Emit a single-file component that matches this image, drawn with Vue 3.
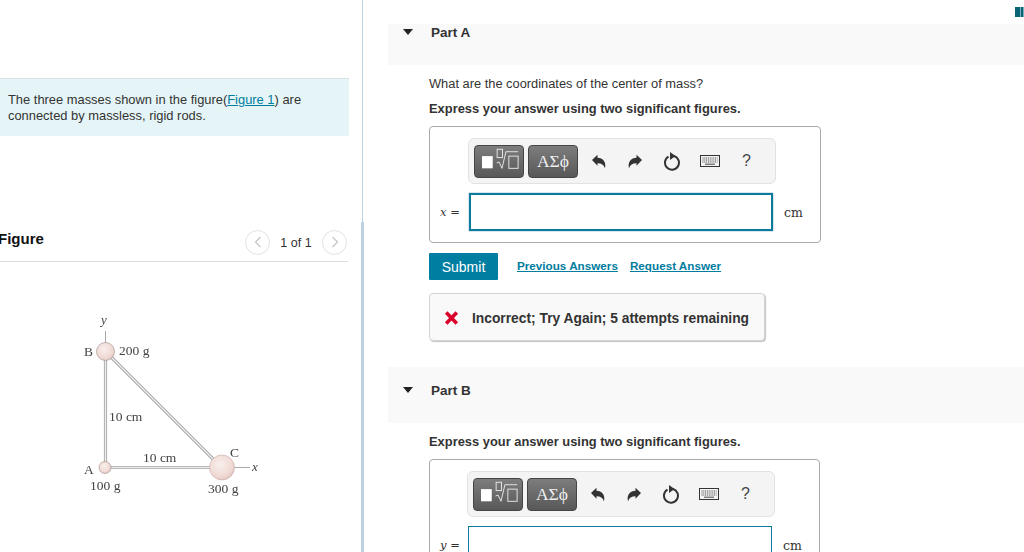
<script setup>
const parts = [
  { id: 'A', cls: 'part-a', question: 'What are the coordinates of the center of mass?', variable: 'x', feedback: true },
  { id: 'B', cls: 'part-b', question: '', variable: 'y', feedback: false }
]
</script>

<template>
  <div class="page">
    <aside class="left">
      <span class="thumb"></span>
      <div class="intro">
        The three masses shown in the figure(<a class="link">Figure 1</a>) are connected by massless, rigid rods.
      </div>
      <div class="fig-head">
        <h2>Figure</h2>
        <div class="pager">
          <span class="circle"><svg width="8" height="12" viewBox="0 0 8 12"><path d="M6.5 1 L1.5 6 L6.5 11" fill="none" stroke="#c4c4c4" stroke-width="1.2"/></svg></span>
          <span class="count">1 of 1</span>
          <span class="circle"><svg width="8" height="12" viewBox="0 0 8 12"><path d="M1.5 1 L6.5 6 L1.5 11" fill="none" stroke="#c4c4c4" stroke-width="1.2"/></svg></span>
        </div>
      </div>
      <svg class="diagram" width="220" height="210" viewBox="60 300 220 210">
        <defs>
          <radialGradient id="ball" cx="0.42" cy="0.38" r="0.7">
            <stop offset="0" stop-color="#f8efec"/>
            <stop offset="0.7" stop-color="#f0d9d4"/>
            <stop offset="1" stop-color="#d9bcb6"/>
          </radialGradient>
        </defs>
        <path d="M105.5 331 V343 M234 467.5 H250" stroke="#aaa" stroke-width="1" fill="none"/>
        <path d="M105.5 352 V467 M106 352 L221 467 M105 467.5 H221" stroke="#a9a9a9" stroke-width="3.2" fill="none"/>
        <path d="M105.5 352 V467 M106 352 L221 467 M105 467.5 H221" stroke="#ececec" stroke-width="1.4" fill="none"/>
        <circle cx="105.5" cy="351.5" r="9" fill="url(#ball)" stroke="#a99a96" stroke-width=".7"/>
        <circle cx="105" cy="467.5" r="6" fill="url(#ball)" stroke="#a99a96" stroke-width=".7"/>
        <circle cx="222" cy="467.5" r="12.5" fill="url(#ball)" stroke="#c9aaa5" stroke-width=".6"/>
        <text class="fig-i" x="101" y="324">y</text>
        <text class="fig-t" x="84" y="356">B</text>
        <text class="fig-t" x="119" y="355">200 g</text>
        <text class="fig-t" x="109" y="421">10 cm</text>
        <text class="fig-t" x="143" y="462">10 cm</text>
        <text class="fig-t" x="230" y="457">C</text>
        <text class="fig-i" x="252" y="471">x</text>
        <text class="fig-t" x="84" y="474">A</text>
        <text class="fig-t" x="90" y="490">100 g</text>
        <text class="fig-t" x="208" y="493">300 g</text>
      </svg>
    </aside>

    <main class="right">
      <span class="corner"></span>
      <section v-for="p in parts" :key="p.id" :class="['part', p.cls]">
        <header class="part-head">
          <span class="tri"></span>
          <span class="part-title">Part {{ p.id }}</span>
        </header>
        <div class="part-body">
          <p v-if="p.question" class="question">{{ p.question }}</p>
          <p class="express">Express your answer using two significant figures.</p>
          <div class="answer">
            <div class="toolbar">
              <button class="tool-btn templ">
                <svg width="42" height="26" viewBox="0 0 42 26">
                  <rect x="0" y="8" width="11" height="12.5" fill="#fff"/>
                  <rect x="15.5" y="1" width="5.5" height="8.5" fill="none" stroke="#e4e4e4" stroke-width="1"/>
                  <path d="M15 15 L17.5 14 L20.5 20.5 L24.5 3.5 H37" fill="none" stroke="#e4e4e4" stroke-width="1"/>
                  <rect x="27.5" y="8" width="9.5" height="12.5" fill="none" stroke="#e4e4e4" stroke-width="1"/>
                </svg>
              </button>
              <button class="tool-btn greek">ΑΣϕ</button>
              <span class="tool t-undo">
                <svg width="16" height="15" viewBox="0 0 16 15"><path d="M1 6 L6.5 .8 V3.8 C12 3.8 15.5 8 14 14.2 C12.8 10.8 10.5 9.2 6.5 9.2 V11.8 Z" fill="#333"/></svg>
              </span>
              <span class="tool t-redo">
                <svg width="16" height="15" viewBox="0 0 16 15"><path d="M15 6 L9.5 .8 V3.8 C4 3.8 .5 8 2 14.2 C3.2 10.8 5.5 9.2 9.5 9.2 V11.8 Z" fill="#333"/></svg>
              </span>
              <span class="tool t-reset">
                <svg width="18" height="20" viewBox="0 0 18 20"><path d="M5.5 5.6 A7 7 0 1 0 11 5" fill="none" stroke="#333" stroke-width="2"/><path d="M7 1 L12.5 5 L7 9 Z" fill="#333"/></svg>
              </span>
              <span class="tool t-keys">
                <svg width="20" height="12" viewBox="0 0 20 12">
                  <rect x=".5" y=".5" width="19" height="11" fill="#f4f4f4" stroke="#333"/>
                  <path d="M2.5 3 H17.5 M2.5 5 H17.5 M2.5 7 H17.5" stroke="#444" stroke-width="1" stroke-dasharray="1 .8"/>
                  <path d="M5 9.2 H15" stroke="#444" stroke-width="1"/>
                </svg>
              </span>
              <span class="tool t-help">?</span>
            </div>
            <div class="entry">
              <span class="var"><i>{{ p.variable }}</i> =</span>
              <div class="field"></div>
              <span class="unit">cm</span>
            </div>
          </div>
          <template v-if="p.feedback">
            <div class="actions">
              <button class="submit">Submit</button>
              <a class="action-link">Previous Answers</a>
              <a class="action-link">Request Answer</a>
            </div>
            <div class="feedback">
              <svg width="15" height="14" viewBox="0 0 15 14"><path d="M2.2 1.5 L12.8 12.5 M12.8 1.5 L2.2 12.5" stroke="#d9032c" stroke-width="3.6" fill="none"/></svg>
              <span>Incorrect; Try Again; 5 attempts remaining</span>
            </div>
          </template>
        </div>
      </section>
    </main>
  </div>
</template>

<style>
html, body { margin: 0; height: 552px; overflow: hidden; background: #fff; }
</style>

<style scoped>
.page {
  display: flex;
  height: 552px;
  overflow: hidden;
  font-family: "Liberation Sans", Arial, sans-serif;
  color: #333;
}
.left {
  position: relative;
  box-sizing: border-box;
  width: 363px;
  flex: none;
  padding: 78px 13px 0 0;
  border-right: 1.5px solid #bcd2e2;
}
.thumb {
  position: absolute;
  top: 222px;
  bottom: 0;
  right: -1.5px;
  width: 2.5px;
  background: #bcd2e2;
}
.intro {
  box-sizing: border-box;
  width: 349px;
  height: 58px;
  padding: 13px 8px 0;
  background: #e5f5f7;
  border-top: 1px solid #d9dfe0;
  font-size: 12.9px;
  line-height: 16px;
}
.link { color: #007c9e; text-decoration: underline; }
.fig-head {
  display: flex;
  align-items: center;
  justify-content: space-between;
  box-sizing: border-box;
  height: 36px;
  margin-top: 90px;
  padding-right: 1px;
  border-bottom: 1px solid #dcdcdc;
  width: 348px;
}
.fig-head h2 {
  margin: -9px 0 0 -2px;
  font-size: 15px;
  line-height: 20px;
  color: #111;
}
.pager { display: flex; align-items: center; margin-top: -3px; }
.circle {
  box-sizing: border-box;
  width: 25px;
  height: 25px;
  display: flex;
  align-items: center;
  justify-content: center;
  border: 1px solid #e2e2e2;
  border-radius: 50%;
}
.count { width: 52px; padding-top: 2px; text-align: center; font-size: 12.5px; color: #333; }
.diagram { display: block; margin: 38px 0 0 60px; filter: blur(.25px); }
.fig-t { font: 13.5px "Liberation Serif", serif; fill: #444; }
.fig-i { font: italic 13px "Liberation Serif", serif; fill: #444; }

.right { position: relative; flex: 1; min-width: 0; padding: 24px 0 0 25px; }
.corner {
  position: absolute;
  top: 7px;
  right: 0;
  width: 9px;
  height: 10px;
  background: linear-gradient(90deg, #0a6478 0 5px, #7fb0bc 5px 6px, #0a6478 6px 8px, #7fb0bc 8px);
}
.part-head {
  display: flex;
  background: #f9f9f9;
  box-sizing: border-box;
  padding-top: 1px;
  height: 41px;
  line-height: 15px;
}
.part-b .part-head { height: 56px; padding-top: 16px; }
.part-b { margin-top: 26px; }
.tri {
  width: 0;
  height: 0;
  margin: 4px 0 0 15px;
  border-left: 5.5px solid transparent;
  border-right: 5.5px solid transparent;
  border-top: 6px solid #222;
}
.part-title { margin-left: 18px; font-size: 13.5px; font-weight: bold; color: #333; }
.part-body { padding-left: 41px; }
.question { margin: 11px 0 0; font-size: 12.85px; line-height: 15px; }
.express { margin: 10px 0 0; font-size: 12.9px; font-weight: bold; line-height: 15px; }
.part-b .express { margin-top: 11px; }
.answer {
  box-sizing: border-box;
  width: 392px;
  height: 117px;
  margin-top: 10px;
  padding: 11px 0 0 43px;
  border: 1px solid #aaa;
  border-radius: 4px;
}
.part-b .answer { width: 391px; }
.toolbar {
  box-sizing: border-box;
  display: flex;
  align-items: center;
  width: 308px;
  height: 46px;
  margin-left: -5px;
  padding-left: 5px;
  background: #f4f4f4;
  border: 1px solid #e2e2e2;
  border-radius: 6px;
}
.tool-btn {
  box-sizing: border-box;
  height: 33px;
  width: 50px;
  padding: 0;
  display: flex;
  align-items: center;
  justify-content: center;
  background: linear-gradient(#7d7d7d, #585858);
  border: 1px solid #454545;
  border-radius: 4px;
}
.templ svg { margin-left: 7px; }
.greek {
  margin-left: 4px;
  color: #eee;
  font: 17.5px "Liberation Serif", serif;
}
.tool { display: flex; justify-content: center; align-items: center; }
.t-undo { margin-left: 13px; }
.t-redo { margin-left: 20px; }
.t-reset { margin-left: 20px; }
.t-keys { margin-left: 19px; }
.t-help { margin-left: 22px; font-size: 16px; color: #444; }
.entry { display: flex; align-items: center; margin: 9px 0 0 -33px; }
.var {
  width: 29px;
  flex: none;
  font: 11.5px "DejaVu Serif", serif;
  color: #333;
  white-space: nowrap;
}
.field {
  box-sizing: border-box;
  width: 304px;
  height: 38px;
  background: #fff;
  border: 2px solid #0d7a9b;
  box-shadow: 0 0 1px #0d7a9b;
  flex: none;
}
.unit { margin-left: 11px; font: 12.5px "DejaVu Serif", serif; color: #333; }
.actions { display: flex; align-items: center; margin-top: 10px; }
.submit {
  box-sizing: border-box;
  width: 69px;
  height: 27px;
  padding: 0;
  margin-right: 19px;
  background: #007ea2;
  color: #fff;
  border: 0;
  border-radius: 1px;
  font: 14px "Liberation Sans", Arial, sans-serif;
}
.action-link {
  margin: -2px 12px 0 0;
  font-size: 11.7px;
  font-weight: bold;
  color: #007c9e;
  text-decoration: underline;
}
.feedback {
  box-sizing: border-box;
  display: flex;
  align-items: center;
  gap: 13px;
  width: 336px;
  height: 48px;
  margin-top: 13px;
  padding: 2px 0 0 14px;
  background: #f9f9f9;
  border: 1px solid #d4d4d4;
  border-radius: 4px;
  box-shadow: 1px 1px 1px #c4c4c4;
  font-size: 13.8px;
  font-weight: bold;
  color: #333;
  white-space: nowrap;
}
.part-b .toolbar { margin-left: -6px; }
.part-b .var { width: 28px; }
.part-b .field { border-width: 1px; box-shadow: none; }
</style>
